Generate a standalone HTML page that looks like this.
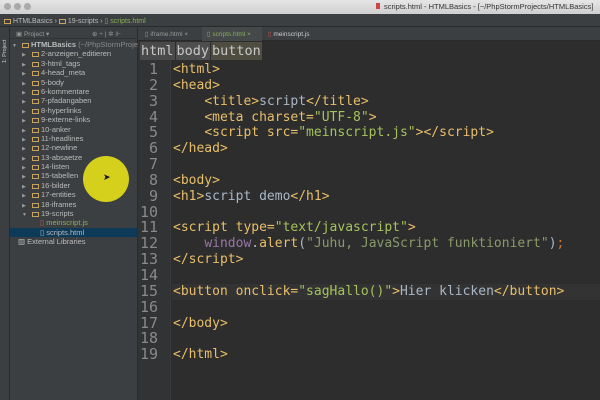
<!DOCTYPE html>
<html><head><meta charset="utf-8"><style>
*{margin:0;padding:0;box-sizing:border-box}
body{width:600px;height:400px;overflow:hidden;background:#2d2d2d;font-family:"Liberation Sans",sans-serif;position:relative}
.a{position:absolute}
#title{left:0;top:0;width:600px;height:14px;background:linear-gradient(#e6e6e6,#cfcfcf);font-size:7.5px;color:#333}
#crumb{left:0;top:14px;width:600px;height:13px;background:#3c3f41;border-bottom:1px solid #2a2a2a;font-size:7px;color:#bbb}
#strip{left:0;top:27px;width:10px;height:373px;background:#3c3f41;border-right:1px solid #2a2a2a}
#side{left:10px;top:27px;width:128px;height:373px;background:#3c3f41;border-right:1px solid #2b2b2b}
#tabs{left:138px;top:27px;width:462px;height:14px;background:#3c3f41;border-bottom:1px solid #2a2a2a;font-size:6.5px}
#gut{left:138px;top:41px;width:33px;height:359px;background:#313335;border-right:1px solid #3a3a3a}
#bc{left:140px;top:42px;height:18px;font-family:"DejaVu Sans Mono",monospace;font-size:13.5px;line-height:18px}
#bc span{display:inline-block;padding:0 1px;margin-right:1px;color:#c8c8c8}
#nums{left:138px;top:62px;width:20px;text-align:right;font-family:"DejaVu Sans Mono",monospace;font-size:15px;line-height:15.85px;color:#8a8a8a}
#code{left:173px;top:62px;font-family:"DejaVu Sans Mono",monospace;font-size:13px;line-height:15.85px;color:#a9b7c6;white-space:pre}
.t{color:#e8bf6a}.v{color:#a5c25c}.w{color:#9876aa}.s{color:#8a9a6a}.p{color:#cc7832}
.row{height:9.4px;line-height:9.4px;font-size:7.5px;color:#bbb;white-space:nowrap}
.f{display:inline-block;width:7px;height:5px;border:1px solid #c9a25e;margin-right:2px;vertical-align:-1px}
.ar{display:inline-block;width:10px;color:#999;font-size:5px}
</style></head><body>
<div id="title" class="a"><span class="a" style="left:4px;top:3px;width:7px;height:7px;border-radius:50%;background:#aaa"></span><span class="a" style="left:14px;top:3px;width:7px;height:7px;border-radius:50%;background:#aaa"></span><span class="a" style="left:24px;top:3px;width:7px;height:7px;border-radius:50%;background:#aaa"></span><span class="a" style="left:376px;top:3px;width:4px;height:6px;background:#c44"></span><span class="a" style="left:384px;top:2px">scripts.html - HTMLBasics - [~/PhpStormProjects/HTMLBasics]</span></div>
<div id="crumb" class="a"><span class="a" style="left:4px;top:3px"><span class="f"></span>HTMLBasics › <span class="f"></span>19-scripts › <span style="color:#8aaf5a">▯ scripts.html</span></span></div>
<div id="strip" class="a"><div style="font-size:5.5px;color:#ccc;transform:rotate(-90deg);position:absolute;left:-12px;top:16px;width:34px">1: Project</div></div>
<div id="side" class="a">
<div style="height:12px;font-size:6.5px;color:#999;padding:3px 0 0 6px;border-bottom:1px solid #333">▣ Project ▾<span style="position:absolute;left:82px">⊕ ÷ | ✲ ⊩</span></div>
<div style="padding-left:2px;padding-top:1px">
<div class="row"><span class="ar">▼</span><span class="f"></span><b>HTMLBasics</b> <span style="color:#888">(~/PhpStormProjects/HT</span></div>
<div style="padding-left:10px">
<div class="row"><span class="ar">▶</span><span class="f"></span>2-anzeigen_editieren</div>
<div class="row"><span class="ar">▶</span><span class="f"></span>3-html_tags</div>
<div class="row"><span class="ar">▶</span><span class="f"></span>4-head_meta</div>
<div class="row"><span class="ar">▶</span><span class="f"></span>5-body</div>
<div class="row"><span class="ar">▶</span><span class="f"></span>6-kommentare</div>
<div class="row"><span class="ar">▶</span><span class="f"></span>7-pfadangaben</div>
<div class="row"><span class="ar">▶</span><span class="f"></span>8-hyperlinks</div>
<div class="row"><span class="ar">▶</span><span class="f"></span>9-externe-links</div>
<div class="row"><span class="ar">▶</span><span class="f"></span>10-anker</div>
<div class="row"><span class="ar">▶</span><span class="f"></span>11-headlines</div>
<div class="row"><span class="ar">▶</span><span class="f"></span>12-newline</div>
<div class="row"><span class="ar">▶</span><span class="f"></span>13-absaetze</div>
<div class="row"><span class="ar">▶</span><span class="f"></span>14-listen</div>
<div class="row"><span class="ar">▶</span><span class="f"></span>15-tabellen</div>
<div class="row"><span class="ar">▶</span><span class="f"></span>16-bilder</div>
<div class="row"><span class="ar">▶</span><span class="f"></span>17-entities</div>
<div class="row"><span class="ar">▶</span><span class="f"></span>18-iframes</div>
<div class="row"><span class="ar">▼</span><span class="f"></span>19-scripts</div>
<div class="row" style="padding-left:18px;color:#8aaf5a"><span style="color:#c55">▯</span> meinscript.js</div>
</div>
<div class="row" style="background:#0d3a58;margin-left:-2px;padding-left:30px">▯ scripts.html</div>
<div class="row" style="padding-left:6px">▥ External Libraries</div>
</div>
<div class="a" style="left:73px;top:129px;width:46px;height:46px;border-radius:50%;background:#d5d01c"></div>
<div class="a" style="left:93px;top:145px;font-size:9px;color:#111">➤</div>
</div>
<div id="tabs" class="a"><span class="a" style="left:7px;top:3px;color:#999">▯ iframe.html ×</span><span class="a" style="left:64px;top:0;height:14px;width:60px;background:#45494a;padding:3px 0 0 5px;color:#8aaf5a">▯ scripts.html ×</span><span class="a" style="left:130px;top:3px;color:#ccc"><span style="color:#c55">▯</span> meinscript.js</span></div>
<div id="gut" class="a"></div>
<div class="a" style="left:172px;top:284px;width:428px;height:16px;background:#333"></div>
<div id="bc" class="a"><span style="background:#4a4a4a">html</span><span style="background:#4e4e4e">body</span><span style="background:#4f4d40">button</span></div>
<div id="nums" class="a">1<br>2<br>3<br>4<br>5<br>6<br>7<br>8<br>9<br>10<br>11<br>12<br>13<br>14<br>15<br>16<br>17<br>18<br>19</div>
<div id="code" class="a"><span class="t">&lt;html&gt;</span>
<span class="t">&lt;head&gt;</span>
    <span class="t">&lt;title&gt;</span>script<span class="t">&lt;/title&gt;</span>
    <span class="t">&lt;meta charset=</span><span class="v">"UTF-8"</span><span class="t">&gt;</span>
    <span class="t">&lt;script src=</span><span class="v">"meinscript.js"</span><span class="t">&gt;&lt;/script&gt;</span>
<span class="t">&lt;/head&gt;</span>

<span class="t">&lt;body&gt;</span>
<span class="t">&lt;h1&gt;</span>script demo<span class="t">&lt;/h1&gt;</span>

<span class="t">&lt;script type=</span><span class="v">"text/javascript"</span><span class="t">&gt;</span>
    <span class="w">window</span>.<span class="t">alert</span>(<span class="s">"Juhu, JavaScript funktioniert"</span>)<span class="p">;</span>
<span class="t">&lt;/script&gt;</span>

<span class="t">&lt;button onclick=</span><span class="v">"sagHallo()"</span><span class="t">&gt;</span>Hier klicken<span class="t">&lt;/button&gt;</span>

<span class="t">&lt;/body&gt;</span>

<span class="t">&lt;/html&gt;</span></div>
</body></html>
